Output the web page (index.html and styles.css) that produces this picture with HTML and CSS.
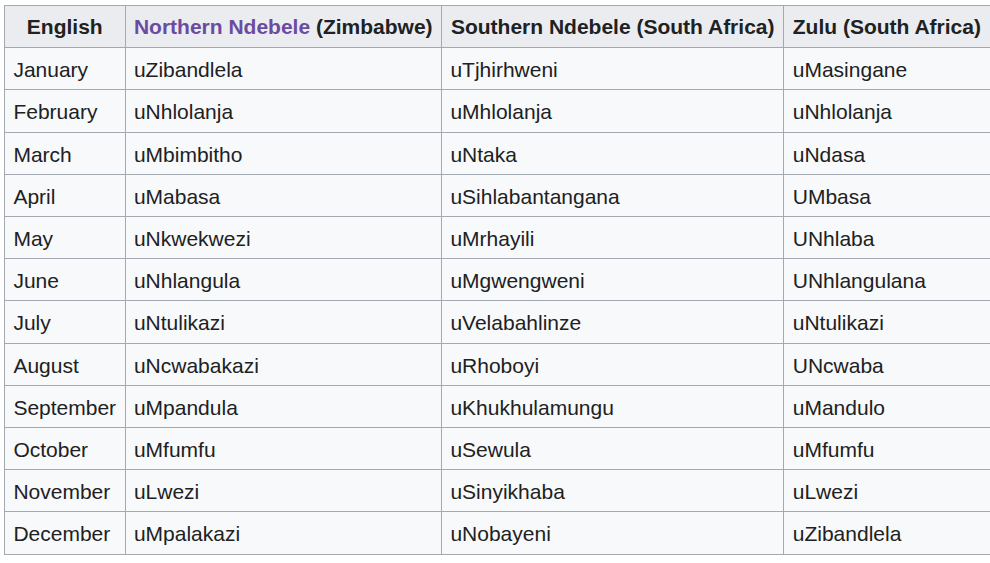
FILE: index.html
```html
<!DOCTYPE html>
<html lang="en">
<head>
<meta charset="utf-8">
<title>Months</title>
<link rel="stylesheet" href="styles.css">
</head>
<body>
<table class="wikitable">
  <thead>
    <tr>
      <th>English</th>
      <th><a class="link" href="#">Northern Ndebele</a> (Zimbabwe)</th>
      <th class="col3">Southern Ndebele (South Africa)</th>
      <th class="col4">Zulu (South Africa)</th>
    </tr>
  </thead>
  <tbody>
    <tr><td>January</td><td>uZibandlela</td><td>uTjhirhweni</td><td>uMasingane</td></tr>
    <tr><td>February</td><td>uNhlolanja</td><td>uMhlolanja</td><td>uNhlolanja</td></tr>
    <tr><td>March</td><td>uMbimbitho</td><td>uNtaka</td><td>uNdasa</td></tr>
    <tr><td>April</td><td>uMabasa</td><td>uSihlabantangana</td><td>UMbasa</td></tr>
    <tr><td>May</td><td>uNkwekwezi</td><td>uMrhayili</td><td>UNhlaba</td></tr>
    <tr><td>June</td><td>uNhlangula</td><td>uMgwengweni</td><td>UNhlangulana</td></tr>
    <tr><td>July</td><td>uNtulikazi</td><td>uVelabahlinze</td><td>uNtulikazi</td></tr>
    <tr><td>August</td><td>uNcwabakazi</td><td>uRhoboyi</td><td>UNcwaba</td></tr>
    <tr><td>September</td><td>uMpandula</td><td>uKhukhulamungu</td><td>uMandulo</td></tr>
    <tr><td>October</td><td>uMfumfu</td><td>uSewula</td><td>uMfumfu</td></tr>
    <tr><td>November</td><td>uLwezi</td><td>uSinyikhaba</td><td>uLwezi</td></tr>
    <tr><td>December</td><td>uMpalakazi</td><td>uNobayeni</td><td>uZibandlela</td></tr>
  </tbody>
</table>
</body>
</html>
```
FILE: styles.css
```css
html, body {
  overflow: hidden;
  background: #ffffff;
}
body {
  margin: 5px 0 0 4px;
  width: 1200px;
  font-family: "Liberation Sans", Arial, sans-serif;
  color: #202122;
}
.wikitable {
  border-collapse: collapse;
  border: 1px solid #a2a9b1;
  background: #f8f9fa;
  font-size: 21px;
  line-height: 32.7px;
}
.wikitable th,
.wikitable td {
  border: 1px solid #a2a9b1;
  padding: 6px 8.4px 2.5px;
  white-space: nowrap;
  text-align: left;
}
.wikitable th {
  background: #eaecf0;
  font-weight: bold;
  text-align: center;
  padding-top: 5px;
  padding-bottom: 3.5px;
}
.wikitable .col3 {
  padding-left: 8.9px;
  padding-right: 8.9px;
}
.wikitable .col4 {
  padding-right: 14px;
}
.link {
  color: #6b4ba1;
  text-decoration: none;
}
```
